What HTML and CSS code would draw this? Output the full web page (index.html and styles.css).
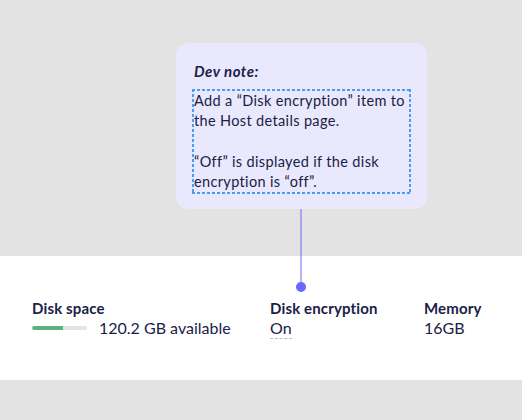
FILE: index.html
```html
<!DOCTYPE html>
<html lang="en">
<head>
<meta charset="utf-8">
<title>Host details – Dev note</title>
<link rel="stylesheet" href="styles.css">
</head>
<body>
  <div class="canvas">
    <div class="note">
      <div class="note-title">Dev note:</div>
      <div class="note-body">
        <p>Add a “Disk encryption” item to the Host details page.</p>
        <p>“Off” is displayed if the disk encryption is “off”.</p>
      </div>
      <div class="stem"><span class="dot"></span></div>
    </div>
  </div>
  <div class="details">
    <div class="item">
      <div class="label">Disk space</div>
      <div class="value disk">
        <span class="bar"><span class="bar-fill" style="width:56%"></span></span>
        <span>120.2 GB available</span>
      </div>
    </div>
    <div class="item">
      <div class="label">Disk encryption</div>
      <div class="value"><span class="tip">On</span></div>
    </div>
    <div class="item">
      <div class="label">Memory</div>
      <div class="value">16GB</div>
    </div>
  </div>
</body>
</html>
```

FILE: styles.css
```css
* { box-sizing: border-box; }

html, body {
  margin: 0;
  padding: 0;
  background: #e3e3e3;
  font-family: Lato, "Noto Sans", "DejaVu Sans", sans-serif;
  color: #192147;
}

.canvas {
  height: 256px;
  padding: 43px 0 0 176px;
}

.note {
  position: relative;
  width: 251px;
  height: 166px;
  padding: 18px 16px 0 16px;
  background: #e9e8fc;
  border-radius: 12px;
}

.note-title {
  font-size: 15px;
  line-height: 20px;
  font-weight: 700;
  font-style: italic;
  letter-spacing: 0.5px;
  padding-left: 2px;
}

.note-body {
  margin-top: 8px;
  padding: 2px;
  font-size: 14.5px;
  line-height: 20.2px;
  letter-spacing: 0.35px;
  background:
    repeating-linear-gradient(90deg, #4a9bf3 0 3px, transparent 3px 5px) left top / 100% 2px no-repeat,
    repeating-linear-gradient(90deg, #4a9bf3 0 3px, transparent 3px 5px) left bottom / 100% 2px no-repeat,
    repeating-linear-gradient(180deg, #4a9bf3 0 3px, transparent 3px 5px) left top / 2px 100% no-repeat,
    repeating-linear-gradient(180deg, #4a9bf3 0 3px, transparent 3px 5px) right top / 2px 100% no-repeat;
}

.note-body p {
  margin: 0;
}

.note-body p + p {
  margin-top: 20.2px;
}

.stem {
  position: absolute;
  top: 100%;
  left: 124px;
  width: 2px;
  height: 78px;
  background: rgba(106, 103, 254, 0.5);
}

.dot {
  position: absolute;
  left: -4px;
  bottom: -5px;
  width: 10px;
  height: 10px;
  border-radius: 50%;
  background: #6a67fe;
}

.details {
  height: 125px;
  background: #ffffff;
  border-bottom: 1px solid #e2e4ea;
  padding: 42px 0 0 32px;
  display: grid;
  grid-template-columns: 238px 154px 1fr;
  align-items: start;
}

.label {
  font-size: 15px;
  line-height: 20px;
  font-weight: 700;
  letter-spacing: 0.15px;
}

.value {
  font-size: 16px;
  line-height: 20px;
}

.disk {
  display: flex;
  align-items: center;
  gap: 12px;
}

.bar {
  display: block;
  width: 55px;
  height: 4px;
  border-radius: 2px;
  background: #e2e4ea;
  overflow: hidden;
}

.bar-fill {
  display: block;
  height: 100%;
  background: #5cb27e;
  border-radius: 2px 0 0 2px;
}

.tip {
  display: inline-block;
  border-bottom: 1px dashed #b8bcc8;
}
```
